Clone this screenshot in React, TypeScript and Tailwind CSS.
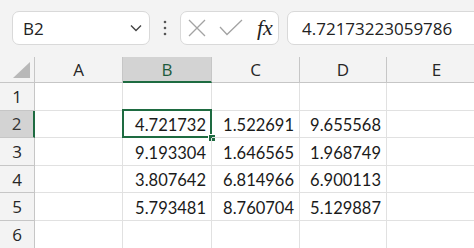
import React from 'react';

const cols = ['A', 'B', 'C', 'D', 'E'];
const widths = ['w-[88px]', 'w-[89px]', 'w-[88px]', 'w-[87px]', 'w-[100px]'];
const data: string[][] = [
  ['', '', '', '', ''],
  ['', '4.721732', '1.522691', '9.655568', ''],
  ['', '9.193304', '1.646565', '1.968749', ''],
  ['', '3.807642', '6.814966', '6.900113', ''],
  ['', '5.793481', '8.760704', '5.129887', ''],
  ['', '', '', '', ''],
];

export default function App() {
  return (
    <div className="w-[474px] h-[248px] overflow-hidden bg-white font-['Open_Sans',sans-serif] text-[#262626]">
      {/* Toolbar */}
      <div className="h-[57px] bg-[#f3f3f3] flex items-start pt-[11px] overflow-hidden">
        <div className="ml-[12px] w-[138px] h-[34px] shrink-0 bg-white border border-[#d9d9d9] rounded-[7px] flex items-center justify-between pl-[10px] pr-[7px]">
          <span className="text-[17px] leading-none text-[#222]">B2</span>
          <svg width="12" height="8" viewBox="0 0 12 8">
            <path d="M1 1.5 L6 6.5 L11 1.5" fill="none" stroke="#444" strokeWidth="1.4" />
          </svg>
        </div>
        <div className="w-[30px] h-[34px] shrink-0 flex items-center justify-center">
          <svg width="4" height="16" viewBox="0 0 4 16">
            <circle cx="2" cy="2" r="1.3" fill="#555" />
            <circle cx="2" cy="8" r="1.3" fill="#555" />
            <circle cx="2" cy="14" r="1.3" fill="#555" />
          </svg>
        </div>
        <div className="w-[99px] h-[34px] shrink-0 bg-white border border-[#d9d9d9] rounded-[7px] flex items-center pl-[7px]">
          <svg width="18" height="18" viewBox="0 0 18 18" className="shrink-0">
            <path d="M1 1 L17 17 M17 1 L1 17" fill="none" stroke="#a3a3a3" strokeWidth="1.3" />
          </svg>
          <svg width="24" height="18" viewBox="0 0 24 18" className="ml-[13px] shrink-0">
            <path d="M1 8 L8 15.5 L23 1" fill="none" stroke="#a3a3a3" strokeWidth="1.3" />
          </svg>
          <span className="ml-[14px] font-['Liberation_Serif',serif] italic text-[22px] leading-none text-[#222]">fx</span>
        </div>
        <div className="ml-[8px] w-[220px] h-[34px] shrink-0 bg-white border border-[#d9d9d9] rounded-[7px] flex items-center pl-[14px]">
          <span className="text-[17px] leading-none text-[#222]">4.72173223059786</span>
        </div>
      </div>

      {/* Column headers */}
      <div className="flex h-[26px] bg-[#f3f3f3]">
        <div className="w-[35px] shrink-0 border-r border-b border-[#c6c6c6] flex items-end justify-end pr-[4px] pb-[4px]">
          <svg width="17" height="16" viewBox="0 0 17 16">
            <path d="M17 0 L17 16 L0 16 Z" fill="#b8b8b8" />
          </svg>
        </div>
        {cols.map((c, i) => (
          <div
            key={c}
            className={`${widths[i]} shrink-0 flex items-center justify-center text-[17px] leading-none ${
              i === 1
                ? 'bg-[#d3d3d3] border-b-2 border-b-[#1e6b41] border-r border-r-[#c6c6c6] text-[#1e5b3c]'
                : 'border-r border-b border-[#c6c6c6]'
            }`}
          >
            {c}
          </div>
        ))}
      </div>

      {/* Rows */}
      {data.map((row, r) => (
        <div key={r} className="flex h-[27.6px]">
          <div
            className={`w-[35px] shrink-0 flex items-center justify-center text-[17px] leading-none ${
              r === 1
                ? 'bg-[#d3d3d3] border-r-2 border-r-[#1e6b41] border-b border-b-[#c6c6c6] text-[#333]'
                : 'bg-[#f3f3f3] border-r border-b border-[#c6c6c6]'
            }`}
          >
            {r + 1}
          </div>
          {row.map((v, c) => (
            <div
              key={c}
              className={`${widths[c]} shrink-0 relative border-r border-b border-[#e1e1e1] flex items-center justify-end pr-[5px] pt-[3px] font-['Lato',sans-serif] text-[16.5px] leading-none text-[#1a1a1a]`}
            >
              {v}
              {r === 1 && c === 1 && (
                <>
                  <div className="absolute left-[-1px] top-[-2px] right-[-1px] bottom-[-1px] border-2 border-[#1e6b41]" />
                  <div className="absolute right-[-5px] bottom-[-5px] w-[8px] h-[8px] bg-[#1e6b41] border border-white" />
                </>
              )}
            </div>
          ))}
        </div>
      ))}
    </div>
  );
}
